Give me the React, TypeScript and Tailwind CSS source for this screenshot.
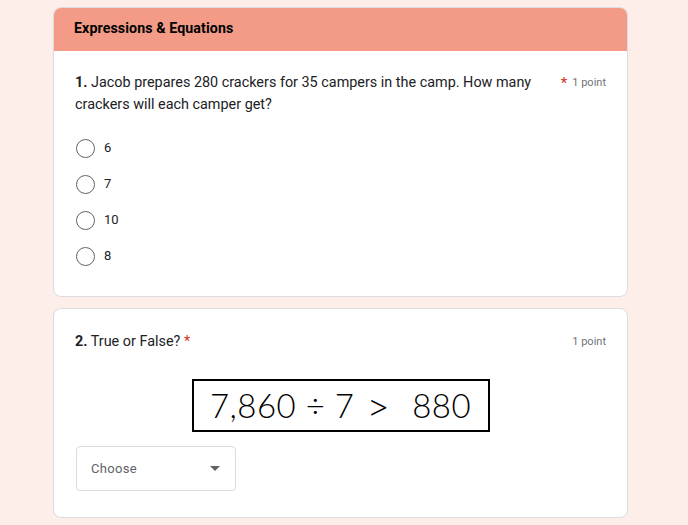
// Quiz form — two question cards on a pink page, Google Forms style.

const options = ["6", "7", "10", "8"];

function Radio({ label }: { label: string }) {
  return (
    <label className="flex items-center h-9 cursor-pointer">
      <span className="w-[19px] h-[19px] rounded-full border-[1.5px] border-[#5f6368] shrink-0 ml-px" />
      <span className="ml-[9px] text-[13px] text-[#202124]">{label}</span>
    </label>
  );
}

export default function App() {
  return (
    <div
      className="min-h-[525px] bg-[#fdeeea] pt-[7px] pb-2"
      style={{ fontFamily: "Roboto, 'Noto Sans', Arial, sans-serif" }}
    >
      <div className="w-[575px] ml-[53px] flex flex-col gap-[11px]">
        <div className="bg-white rounded-lg border border-[#dadce0] overflow-hidden">
          <div className="h-[44px] bg-[#f49b87] flex items-center pl-[21px] -mx-px -mt-px">
            <h2 className="text-[14.2px] font-bold text-black tracking-[0.1px]">Expressions &amp; Equations</h2>
          </div>
          <div className="pl-[21px] pr-[21px] pt-[21px] pb-[22px]">
            <div className="flex items-start">
              <p className="flex-1 text-[14.4px] leading-[22px] text-[#202124] pr-2">
                <span className="font-bold">1.</span> Jacob prepares 280 crackers for 35 campers in the camp. How many crackers will each camper get?
              </p>
              <span className="text-[#d93025] text-[15px] leading-[22px] mr-[5px]">*</span>
              <span className="text-[11px] leading-[22px] text-[#70757a] whitespace-nowrap">1 point</span>
            </div>
            <div className="mt-[14px] flex flex-col">
              {options.map((o) => (
                <Radio key={o} label={o} />
              ))}
            </div>
          </div>
        </div>

        <div className="bg-white rounded-lg border border-[#dadce0] pl-[21px] pr-[21px] pt-[22px] pb-[26px]">
          <div className="flex items-start">
            <p className="flex-1 text-[14.4px] leading-[22px] text-[#202124]">
              <span className="font-bold">2.</span> True or False? <span className="text-[#d93025]">*</span>
            </p>
            <span className="text-[11px] leading-[22px] text-[#70757a] whitespace-nowrap">1 point</span>
          </div>
          <div className="flex justify-center mt-[26px]">
            <div
              className="w-[298px] h-[53px] border-2 border-black flex items-center justify-center text-[33px] leading-none font-light text-black tracking-[0.5px]"
              style={{ fontFamily: "Lato, 'Open Sans', sans-serif" }}
            >
              <span className="whitespace-pre">7,860 ÷ 7</span>
              <span className="ml-[12px] text-[40px] leading-none">&gt;</span>
              <span className="ml-[22px]">880</span>
            </div>
          </div>
          <button
            type="button"
            className="mt-[14px] ml-px w-[160px] h-[45px] border border-[#dadce0] rounded flex items-center pl-[14px] pr-[15px]"
          >
            <span className="flex-1 text-left text-[13px] text-[#5f6368] tracking-[0.3px]">Choose</span>
            <svg width="10" height="5" viewBox="0 0 10 5">
              <path d="M0 0 L10 0 L5 5 Z" fill="#5f6368" />
            </svg>
          </button>
        </div>
      </div>
    </div>
  );
}
